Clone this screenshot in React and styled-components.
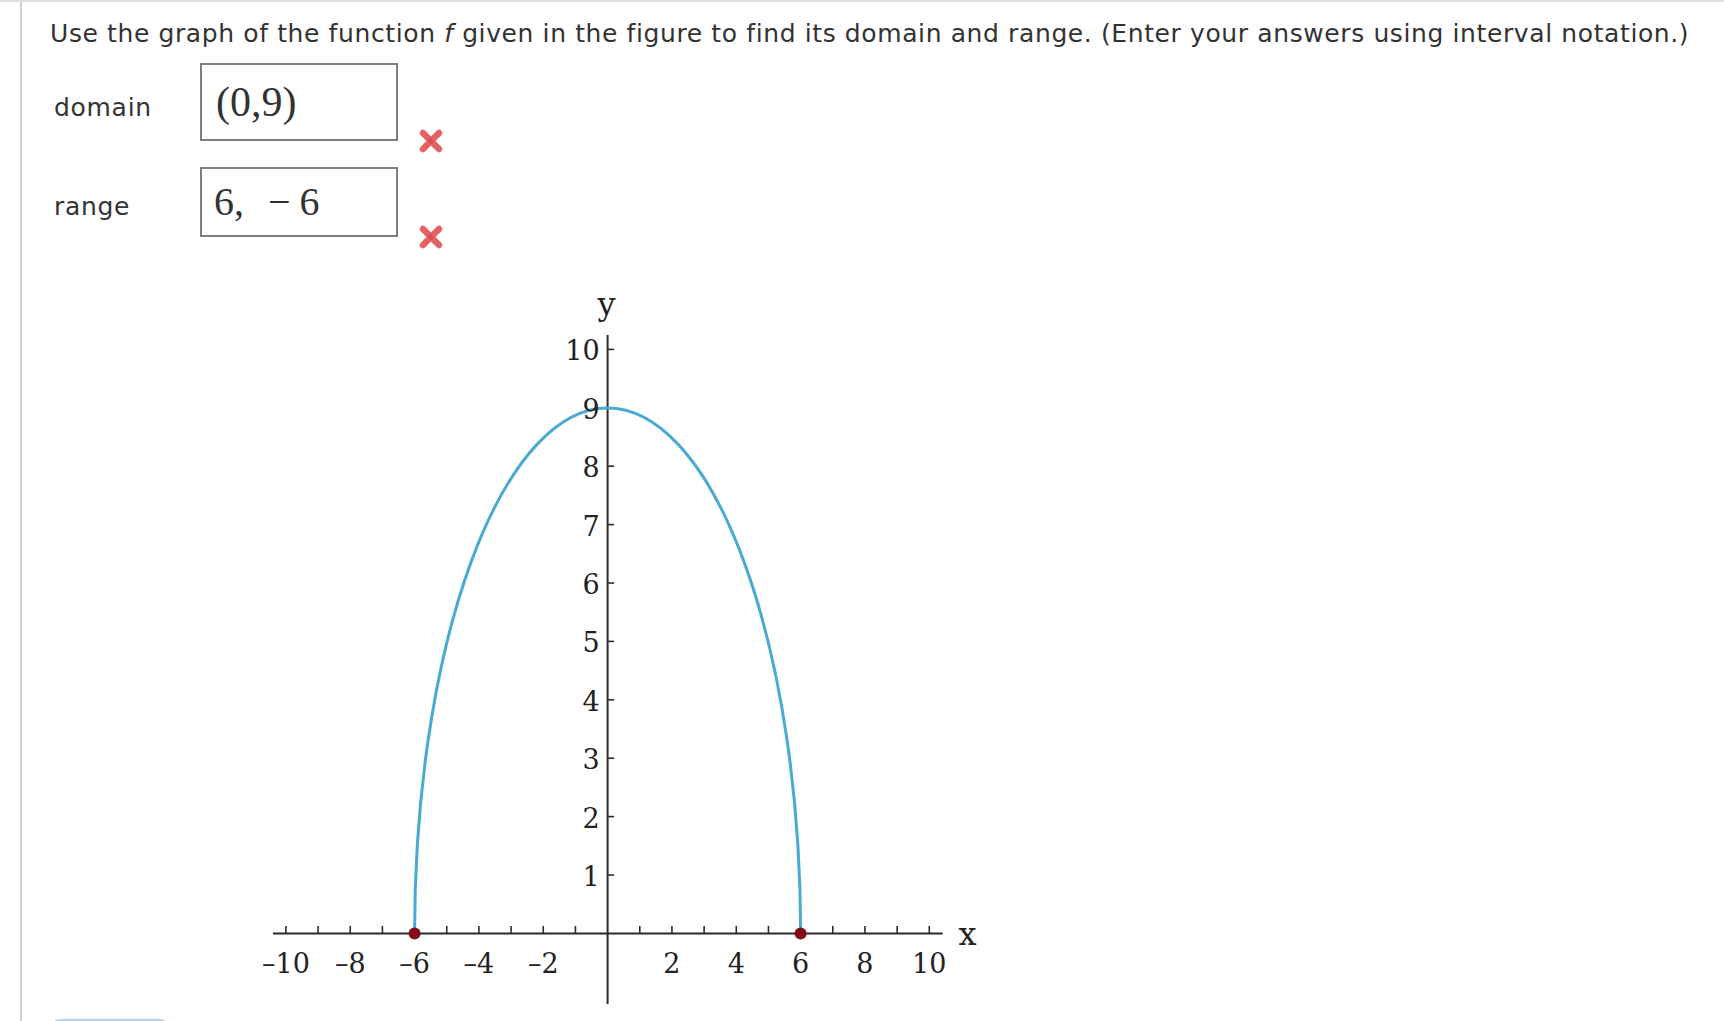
import React from "react";
import styled, { createGlobalStyle } from "styled-components";

const GlobalStyle = createGlobalStyle`
  html, body {
    margin: 0;
    padding: 0;
    overflow: hidden;
    background: #fff;
  }
  body {
    font-family: "DejaVu Sans", Verdana, sans-serif;
    color: #333;
  }
`;

// graph geometry (svg units = px)
const OX = 377.6;
const OY = 653.4;
const UX = 32.17;
const UY = 58.4;
const X = (t) => OX + UX * t;
const Y = (v) => OY - UY * v;

const xTicks = [-10, -9, -8, -7, -6, -5, -4, -3, -2, -1, 1, 2, 3, 4, 5, 6, 7, 8, 9, 10];
const xLabels = [-10, -8, -6, -4, -2, 2, 4, 6, 8, 10];
const yTicks = [1, 2, 3, 4, 5, 6, 7, 8, 9, 10];

const fmt = (n) => (n < 0 ? `\u2013${-n}` : `${n}`);

const WrongMark = () => (
  <Mark>
    <svg width="28" height="26" viewBox="0 0 28 26">
      <g stroke="#e56262" strokeWidth="6.5" strokeLinecap="round">
        <line x1="6" y1="5" x2="22" y2="21" />
        <line x1="22" y1="5" x2="6" y2="21" />
      </g>
      <circle cx="14" cy="13" r="2.5" fill="#d94c4c" />
    </svg>
  </Mark>
);

const Graph = () => (
  <svg width="770" height="730" viewBox="0 0 770 730">
    <g stroke="#2b2b2b" fill="none">
      <line x1="43" y1={OY} x2="712.7" y2={OY} strokeWidth="2" />
      <line x1={OX} y1="55" x2={OX} y2="724" strokeWidth="2" />
      {xTicks.map((t) => (
        <line key={t} x1={X(t)} y1={OY} x2={X(t)} y2={OY - 7.5} strokeWidth="1.6" />
      ))}
      {yTicks.map((v) => (
        <line key={v} x1={OX} y1={Y(v)} x2={OX + 6.5} y2={Y(v)} strokeWidth="1.6" />
      ))}
    </g>

    <path
      d={`M ${X(-6)} ${Y(0)} A ${6 * UX} ${9 * UY} 0 0 1 ${X(6)} ${Y(0)}`}
      fill="none"
      stroke="#4aabd0"
      strokeWidth="3"
    />
    <circle cx={X(-6)} cy={Y(0)} r="6" fill="#840c18" />
    <circle cx={X(6)} cy={Y(0)} r="6" fill="#840c18" />

    <g fontFamily='"DejaVu Serif", serif' fontSize="27" fill="#222">
      {xLabels.map((t) => (
        <text key={t} x={X(t)} y={OY + 39.5} textAnchor="middle">
          {fmt(t)}
        </text>
      ))}
      {yTicks.map((v) => (
        <text key={v} x={OX - 8} y={Y(v) + 11} textAnchor="end">
          {v}
        </text>
      ))}
    </g>
    <g fontFamily='"DejaVu Serif", serif' fontSize="32" fill="#222" textAnchor="middle">
      <text x="376.5" y="34.5">y</text>
      <text x="737.5" y="665">x</text>
    </g>
  </svg>
);

export default function App() {
  return (
    <>
      <GlobalStyle />
      <Page>
        <Panel>
          <Question>
            Use the graph of the function <i>f</i> given in the figure to find its domain and range.
            (Enter your answers using interval notation.)
          </Question>

          <AnswerRow $gap={14.3}>
            <Label>domain</Label>
            <MathBox $h={78} $pad={14} $size={42}>
              (0,9)
            </MathBox>
            <WrongMark />
          </AnswerRow>

          <AnswerRow $gap={25.4}>
            <Label>range</Label>
            <MathBox $h={70} $pad={12} $size={40}>
              <span>6,</span>
              <Op>−</Op>
              <span>6</span>
            </MathBox>
            <WrongMark />
          </AnswerRow>

          <Figure>
            <Graph />
          </Figure>

          <SubmitButton type="button" />
        </Panel>
      </Page>
    </>
  );
}

const Page = styled.div`
  border-top: 2px solid #dedede;
  padding-left: 20px;
  min-height: 100vh;
  box-sizing: border-box;
`;

const Panel = styled.div`
  border-left: 2px solid #cfcfcf;
  padding: 17px 0 0 28px;
  min-height: calc(100vh - 2px);
  box-sizing: border-box;
`;

const Question = styled.p`
  margin: 0;
  font-size: 25px;
  letter-spacing: 0.61px;
  line-height: 30px;
  color: #333;
  white-space: nowrap;

  i {
    font-style: italic;
  }
`;

const AnswerRow = styled.div`
  display: flex;
  align-items: baseline;
  margin-top: ${(p) => p.$gap}px;
  padding-left: 4px;
`;

const Label = styled.span`
  width: 146px;
  flex-shrink: 0;
  font-size: 25px;
  letter-spacing: 0.7px;
  line-height: 30px;
  color: #333;
`;

const MathBox = styled.div`
  box-sizing: border-box;
  width: 198px;
  height: ${(p) => p.$h}px;
  border: 2px solid #7f7f7f;
  display: flex;
  align-items: center;
  padding-left: ${(p) => p.$pad}px;
  font-family: "Liberation Serif", "Times New Roman", serif;
  font-size: ${(p) => p.$size}px;
  line-height: 1;
  color: #333;
  white-space: nowrap;
`;

const Op = styled.span`
  margin: 0 9px 0 24px;
`;

const Mark = styled.span`
  align-self: flex-end;
  display: flex;
  margin: 0 0 -13px 19px;
  width: 28px;
  height: 26px;
`;

const Figure = styled.div`
  margin: 43.3px 0 0 180px;
  width: 770px;
  height: 730px;

  svg {
    display: block;
  }
`;

const SubmitButton = styled.button`
  display: block;
  margin: 9px 0 0 3px;
  width: 114px;
  height: 40px;
  border: none;
  border-radius: 6px;
  background: #b7d2f0;
  padding: 0;
`;
